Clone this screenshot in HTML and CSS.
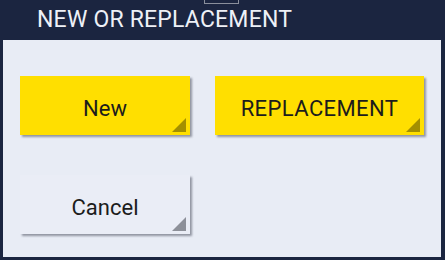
FILE: index.html
```html
<!DOCTYPE html>
<html>
<head>
<meta charset="utf-8">
<link rel="stylesheet" href="styles.css">
</head>
<body>
<div class="screen">
  <div class="tab-mark"></div>
  <header class="title-bar">NEW OR REPLACEMENT</header>
  <main class="panel">
    <div class="row">
      <button class="btn btn-yellow btn-new">New</button>
      <button class="btn btn-yellow btn-repl">REPLACEMENT</button>
    </div>
    <div class="row">
      <button class="btn btn-light btn-new">Cancel</button>
    </div>
  </main>
</div>
</body>
</html>
```
FILE: styles.css
```css
html, body {
  margin: 0;
  padding: 0;
  background: #1b2540;
}
.screen {
  position: relative;
  width: 445px;
  height: 260px;
  display: flex;
  flex-direction: column;
  font-family: Roboto, "Noto Sans", sans-serif;
}
.tab-mark {
  position: absolute;
  left: 204px;
  top: -2px;
  width: 33px;
  height: 4px;
  border: 1px solid #8a8f9c;
}
.title-bar {
  height: 40px;
  box-sizing: border-box;
  padding: 7px 0 0 37px;
  color: #eef1f7;
  font-size: 23px;
  line-height: 26px;
  letter-spacing: 0.2px;
}
.panel {
  flex: 1;
  margin: 0 4px 3px 3px;
  background: #e8ecf5;
  padding: 36px 0 0 17px;
  display: flex;
  flex-direction: column;
  gap: 40px;
}
.row {
  display: flex;
  gap: 25px;
}
.btn {
  position: relative;
  height: 59px;
  border: none;
  margin: 0;
  padding: 5px 0 0 0;
  font-family: Roboto, "Noto Sans", sans-serif;
  font-size: 22px;
  color: #1c1c1c;
  box-shadow: 2px 2px 2px rgba(40, 45, 60, 0.45);
}
.btn::after {
  content: "";
  position: absolute;
  right: 4px;
  bottom: 3px;
  width: 0;
  height: 0;
  border-style: solid;
  border-width: 0 0 14px 14px;
  border-color: transparent transparent #a38f00 transparent;
}
.btn-yellow {
  background: #ffdf00;
}
.btn-light {
  background: #eaedf6;
}
.btn-light::after {
  border-color: transparent transparent #8d9099 transparent;
}
.btn-new {
  width: 170px;
}
.btn-repl {
  width: 209px;
  letter-spacing: 0.4px;
}
```
